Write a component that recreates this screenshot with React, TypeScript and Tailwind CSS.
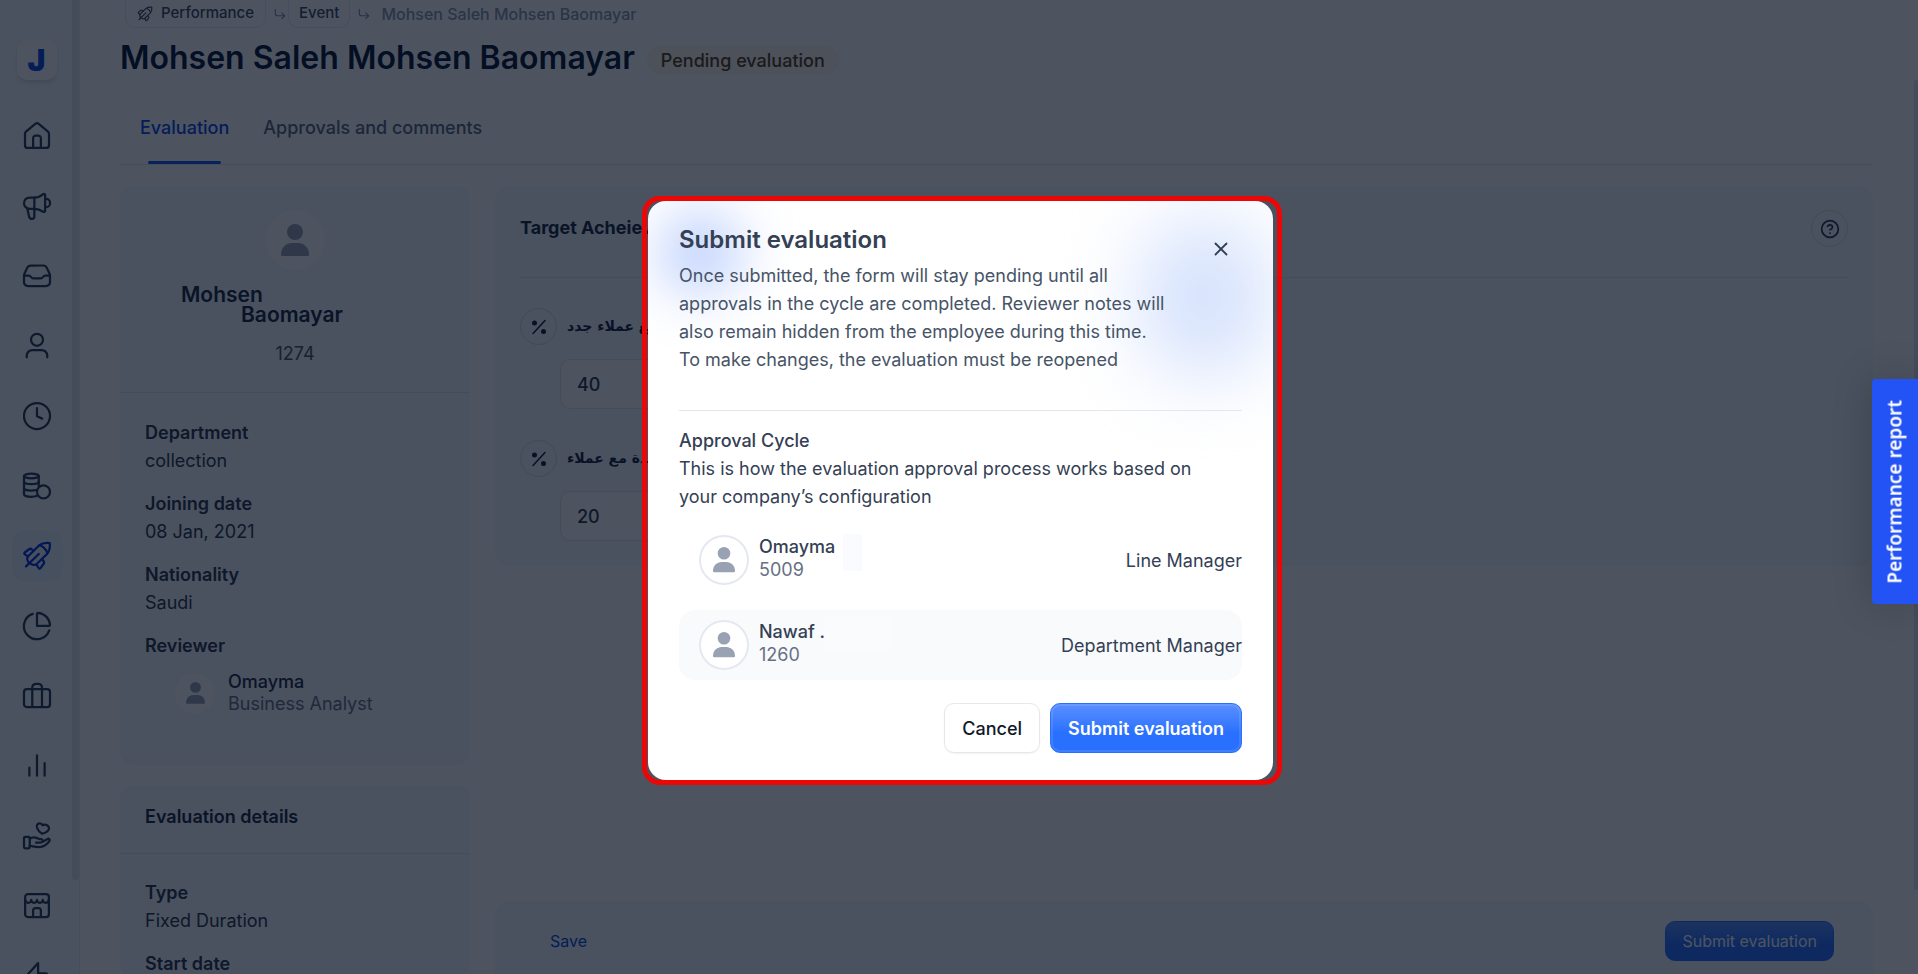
import React from "react";
import { CornerDownRight, X, CircleHelp } from "lucide-react";

interface IconProps {
  className?: string;
  children: React.ReactNode;
}

const Icon: React.FC<IconProps> = ({ className = "size-[30px]", children }) => (
  <svg
    viewBox="0 0 24 24"
    fill="none"
    stroke="currentColor"
    strokeWidth="1.8"
    strokeLinecap="round"
    strokeLinejoin="round"
    className={className}
    aria-hidden="true"
  >
    {children}
  </svg>
);

const rocket = (
  <>
    <path d="M13.6 3.6C16 1.7 19 1.3 22.2 1.7c.4 3.3-.2 6.3-2.1 8.6l-8.8 8.5c-1.6 1-4.4-.2-5.6-1.4s-2.1-3.6-.8-5.2z" />
    <path d="M14.2 3.4c2.8 1 5 3.2 6.2 6.2M3.2 20.3l10.2-9.9" />
    <path d="M9.2 8L8 6.8c-.6-.6-1.6-.7-2.3-.2L2.2 9.2c-.6.5-.5 1.1.1 1.5l2.5 1.6" />
    <path d="M15.9 14.6l1.2 1.3c.6.6.7 1.6.2 2.3l-2.5 3.5c-.5.6-1.2.5-1.5-.1l-1.7-2.7" />
  </>
);

const navItems: { label: string; active?: boolean; icon: React.ReactNode }[] = [
  {
    label: "Home",
    icon: (
      <>
        <path d="M2.4 10.2v9.1a2.2 2.2 0 002.2 2.2h14.8a2.2 2.2 0 002.2-2.2v-9.1c0-.7-.3-1.3-.8-1.7l-7.4-6.2a2.2 2.2 0 00-2.8 0L3.2 8.5a2.2 2.2 0 00-.8 1.7z" />
        <path d="M8.9 21.5v-7.7a2.2 2.2 0 012.2-2.2h1.8a2.2 2.2 0 012.2 2.2v7.7" />
      </>
    ),
  },
  {
    label: "Announcements",
    icon: (
      <>
        <path d="M9.9 5.2H6.1a4.5 4.5 0 000 9h3.8z" />
        <path d="M9.9 5.2c2.8 0 5.3-1.1 7.1-2.7.6-.5 1.5-.1 1.5.7v12.6c0 .8-.8 1.2-1.5.8-2-1.4-4.3-2.4-7.1-2.4" />
        <path d="M4.3 14.2l1.3 6.1c.3 1.2 1.2 2 2.4 2s1.9-.9 1.9-2.1v-6M18.5 6.3h.9a3 3 0 013 3v.6a3 3 0 01-3 3h-.9" />
      </>
    ),
  },
  {
    label: "Inbox",
    icon: (
      <>
        <path d="M1.6 12v4.9A3.1 3.1 0 004.7 20h14.6a3.1 3.1 0 003.1-3.1V12c0-.9-.2-1.6-.6-2.4l-2-4.2a3 3 0 00-2.7-1.8H6.9a3 3 0 00-2.7 1.8l-2 4.2c-.4.8-.6 1.5-.6 2.4z" />
        <path d="M1.6 11.7h3.7c1 0 1.5.5 1.9 1.1s1 1.1 1.9 1.1h5.8c.9 0 1.5-.5 1.9-1.1s.9-1.1 1.9-1.1h3.7" />
      </>
    ),
  },
  {
    label: "Employees",
    icon: (
      <>
        <circle cx="12" cy="7" r="4.8" />
        <path d="M3.8 21v-1.3a4.5 4.5 0 014.5-4.5h7.4a4.5 4.5 0 014.5 4.5V21" />
      </>
    ),
  },
  {
    label: "Attendance",
    icon: (
      <>
        <circle cx="12" cy="12" r="10.4" />
        <path d="M12 5.7v6.5l4.1 1.9" />
      </>
    ),
  },
  {
    label: "Payroll",
    icon: (
      <>
        <ellipse cx="7.5" cy="4" rx="5.9" ry="1.9" />
        <path d="M1.6 4v14.6c0 1.1 2.6 2 5.9 2 1.7 0 3.2-.2 4.3-.6M13.4 4v8.6" />
        <path d="M1.6 8.6c0 1.1 2.6 1.9 5.9 1.9s5.9-.8 5.9-1.9M1.6 13.7c0 1.1 2.6 1.9 5.9 1.9 1.5 0 2.8-.1 3.8-.4" />
        <circle cx="17.2" cy="16.7" r="5.2" />
      </>
    ),
  },
  { label: "Performance", active: true, icon: rocket },
  {
    label: "Reports",
    icon: (
      <>
        <path d="M8.6 2.3a10.4 10.4 0 1013.2 13.2" />
        <path d="M12.7 1.5c5.2.3 9.4 4.5 9.7 9.7 0 .4-.3.7-.7.7H12V2.2c0-.4.3-.7.7-.7z" />
      </>
    ),
  },
  {
    label: "Recruitment",
    icon: (
      <>
        <rect x="1.6" y="6.5" width="20.8" height="14.3" rx="2.2" />
        <path d="M8.2 20.7V5.2a3 3 0 013-3h1.8a3 3 0 013 3v15.5" />
      </>
    ),
  },
  {
    label: "Analytics",
    icon: <path d="M5.9 13.3v6.5M12 3.5v16.3M18.1 9.6v10.2" />,
  },
  {
    label: "Benefits",
    icon: (
      <>
        <rect x="1.6" y="12.6" width="4.6" height="9.2" rx="1" />
        <path d="M6.2 19.8c2.8.4 5.4 1.5 8.4 1 3-.4 5.7-2.4 7.4-4.9.7-1-.4-2.1-1.5-1.5l-4.3 2.3c-.8.5-1.8.6-2.7.6h-2.2" />
        <path d="M6.2 14.2c1.8-1.2 4.2-1.3 6.3-.3l1.5.5h1.3a1.7 1.7 0 011.4 2" />
        <path d="M16.2 10.2c-2-1.2-4-3.500-4.3-5.700-.2-1.800 1.400-3 3-2.500.7.2 1.200.8 1.500 1.400.6-.4 1.300-.7 2.300-.5 1.900.3 3.300 1.900 2.800 3.600-.7 1.900-3.100 3.100-5.300 3.700z" />
      </>
    ),
  },
  {
    label: "Marketplace",
    icon: (
      <>
        <rect x="2.5" y="2.5" width="19" height="18.3" rx="2.2" />
        <path d="M2.5 6.8c0 1.6 1.1 2.6 2.5 2.6s2.4-1 2.4-2.4c0 1.4 1.1 2.4 2.3 2.4S12 8.4 12 7c0 1.4 1.1 2.4 2.3 2.4s2.3-1 2.3-2.4c0 1.4 1 2.4 2.4 2.4s2.5-1 2.5-2.6" />
        <path d="M8.9 20.8v-5.2a2 2 0 012-2h2.2a2 2 0 012 2v5.2" />
      </>
    ),
  },
  {
    label: "Automation",
    icon: <path d="M12.9 1.6L4.2 11.2c-.7.8-.2 1.6.8 1.6h4.6L8 20.6c-.3 1.6.7 2 1.7.9l9.9-10.2c.7-.8.3-1.5-.7-1.5h-6z" />,
  },
];

// Silhueta padrão do avatar
const Person: React.FC<{ className: string }> = ({ className }) => (
  <svg viewBox="0 0 28 32" fill="currentColor" className={className} aria-hidden="true">
    <circle cx="14" cy="8" r="8" />
    <path d="M0 30.5C0 23.5 5 19 11 19h6c6 0 11 4.5 11 11.5 0 1-.5 1.5-1.5 1.5h-25C.5 32 0 31.5 0 30.5z" />
  </svg>
);

const Percent = () => (
  <span className="flex size-[37px] shrink-0 items-center justify-center rounded-full border border-[#d5dbe5]">
    <svg viewBox="0 0 16 16" className="size-4 text-[#16223c]" aria-hidden="true">
      <path d="M2 14.5L14 1.5" stroke="currentColor" strokeWidth="1.5" strokeLinecap="round" />
      <circle cx="3.5" cy="4" r="2.5" fill="currentColor" />
      <circle cx="12.5" cy="12.5" r="2.5" fill="currentColor" />
    </svg>
  </span>
);

const Field: React.FC<{ label: string; value: string }> = ({ label, value }) => (
  <div className="mb-[15px] leading-7">
    <dt className="font-semibold text-[#2c374b]">{label}</dt>
    <dd className="text-[#2c374b]">{value}</dd>
  </div>
);

const Target: React.FC<{ id: string; title: string; value: string }> = ({ id, title, value }) => (
  <div className="mb-[31px]">
    <div className="flex items-center gap-[10px]">
      <Percent />
      <label htmlFor={id} dir="rtl" className="font-['DejaVu_Sans',sans-serif] text-[14px] font-bold text-[#16223c]">
        {title}
      </label>
    </div>
    <input
      id={id}
      defaultValue={value}
      className="mt-[14px] ml-10 block h-[50px] w-1/3 rounded-[10px] border border-[#dfe4ec] bg-white px-4 font-medium text-[#2c374b]"
    />
  </div>
);

interface ApproverProps {
  name: string;
  code: string;
  role: string;
  rowClass?: string;
  children?: React.ReactNode;
}

const Approver: React.FC<ApproverProps> = ({ name, code, role, rowClass = "", children }) => (
  <li className={`flex h-[70px] items-center rounded-2xl pl-5 ${rowClass}`}>
    <span className="flex size-[50px] items-center justify-center rounded-full border-2 border-[#e4e8ef] bg-white">
      <Person className="w-[22px] text-[#98a2b3]" />
    </span>
    <div className="mb-1 ml-[10px] leading-[23px]">
      <p className="font-medium text-[#344054]">{name}</p>
      <p className="text-[#667085]">{code}</p>
    </div>
    {children}
    <span className="ml-auto text-[#344054]">{role}</span>
  </li>
);

const SubmitModal = () => (
  <div className="fixed inset-0 z-20 flex items-start justify-center bg-[#020c1d]/70 pt-[196px] pl-1.5">
    <div className="w-[640px] rounded-[18px] border-5 border-[#ec0606] pr-1 pl-px">
      <div
        role="dialog"
        aria-labelledby="modal-title"
        className="relative overflow-hidden rounded-[18px] bg-white px-[31px] pt-[25px] pb-[27px]"
      >
        <div className="absolute top-3 left-3 size-20 rounded-full bg-[#b9cdfc] blur-[28px]"></div>
        <div className="absolute top-4 right-1 h-40 w-32 rounded-full bg-[#d3e0fc] blur-[40px]"></div>

        <div className="relative flex items-start justify-between border-b border-[#e4e7ec] pb-9">
          <div>
            <h2 id="modal-title" className="mb-2 text-[24px] leading-7 font-semibold text-[#344054]">
              Submit evaluation
            </h2>
            <p className="leading-7 text-[#475467]">
              Once submitted, the form will stay pending until all
              <br />
              approvals in the cycle are completed. Reviewer notes will
              <br />
              also remain hidden from the employee during this time.
              <br />
              To make changes, the evaluation must be reopened
            </p>
          </div>
          <button aria-label="Close" className="mt-3 mr-[10px] text-[#344054]">
            <X className="size-[22px]" strokeWidth={2} />
          </button>
        </div>

        <h3 className="mt-4 leading-7 font-medium text-[#344054]">Approval Cycle</h3>
        <p className="leading-7 text-[#344054]">
          This is how the evaluation approval process works based on
          <br />
          your company’s configuration
        </p>

        <ul className="mt-[14px] flex flex-col gap-[15px]">
          <Approver name="Omayma" code="5009" role="Line Manager">
            <span className="mb-4 ml-2 h-[37px] w-[19px] bg-[#fafbfe]"></span>
          </Approver>
          <Approver name="Nawaf ." code="1260" role="Department Manager" rowClass="bg-[#f9fafb]">
            <span className="mb-6 h-[34px] w-[66px] bg-[#fafbfc]"></span>
          </Approver>
        </ul>

        <div className="mt-[23px] flex justify-end gap-[10px]">
          <button className="h-[50px] rounded-[10px] border border-[#e4e7ec] px-[17px] font-medium text-[#101828] shadow-xs">
            Cancel
          </button>
          <button className="h-[50px] rounded-[10px] border border-[#2970ff] bg-linear-to-b from-[#5a90ff] to-[#2970ff] to-60% px-[17px] font-semibold text-white inset-ring-2 inset-ring-white/10">
            Submit evaluation
          </button>
        </div>
      </div>
    </div>
  </div>
);

const App = () => {
  return (
    <div className="flex h-screen overflow-hidden bg-white font-['Inter',sans-serif] text-[18px] text-[#101828]">
      <nav className="relative flex w-20 shrink-0 flex-col items-center border-r border-[#e6e9ee] bg-[#f8f9fc] pt-10 pr-[6px]">
        <a
          href="#"
          className="flex size-10 shrink-0 items-center justify-center rounded-[10px] bg-white text-[30px] leading-none font-black text-[#0a47e0] shadow-md"
        >
          J
        </a>
        <div className="mt-[31px] flex flex-col gap-5">
          {navItems.map((item) => (
            <a
              key={item.label}
              href="#"
              aria-label={item.label}
              className={
                item.active
                  ? "flex size-[50px] items-center justify-center rounded-xl bg-[#eaf1fb] text-[#0a35d0]"
                  : "flex size-[50px] items-center justify-center text-[#2b3a56]"
              }
            >
              <Icon>{item.icon}</Icon>
            </a>
          ))}
        </div>
        <div className="absolute top-0 right-0 h-[880px] w-[7px] rounded-b bg-[#dfe5ec]"></div>
      </nav>

      <main className="flex min-w-0 flex-1 flex-col pr-[45px] pl-10">
        <div className="ml-[5px] flex h-7 shrink-0 items-center text-[15px] text-[#3f4a5e]">
          <a href="#" className="flex h-7 items-center gap-2 rounded-b-[10px] border border-t-0 border-[#e6e8f4] px-[11px] font-medium">
            <Icon className="size-4">{rocket}</Icon>
            Performance
          </a>
          <CornerDownRight className="mr-px ml-[7px] size-[14px] text-[#8290a8]" />
          <a href="#" className="flex h-7 items-center rounded-b-[10px] border border-t-0 border-[#e6e8f4] px-[10px] font-medium">
            Event
          </a>
          <CornerDownRight className="mr-[10px] ml-[7px] size-[14px] text-[#8290a8]" />
          <span className="text-[16px] font-medium text-[#8b96aa]">Mohsen Saleh Mohsen Baomayar</span>
        </div>

        <div className="mt-[10px] flex h-10 shrink-0 items-center gap-3">
          <h1 className="text-[32px] font-semibold text-[#0d1838]">Mohsen Saleh Mohsen Baomayar</h1>
          <span className="mt-1 flex h-[30px] items-center rounded-full bg-[#fdf4ec] px-[14px] font-medium text-[#5a3d18]">
            Pending evaluation
          </span>
        </div>

        <div className="mt-[34px] flex h-[53px] shrink-0 gap-[34px] border-b border-[#e0e3e9] pl-5">
          <button className="relative flex flex-col items-center pt-0.5 font-medium text-[#0a47e0]">
            Evaluation
            <span className="absolute bottom-0 h-[3px] w-[73px] rounded bg-[#1656ee]"></span>
          </button>
          <button className="self-start pt-0.5 font-medium text-[#5b667a]">Approvals and comments</button>
        </div>

        <div className="flex min-h-0 flex-1 gap-[25px] pt-[21px]">
          <aside className="w-[350px] shrink-0">
            <section className="h-[579px] rounded-[14px] bg-[#f5f6fa] pt-6">
              <span className="mx-auto flex size-[60px] items-center justify-center rounded-full bg-white">
                <Person className="w-7 text-[#98a2b3]" />
              </span>
              <p className="mt-[15px] text-[21px] leading-5 font-semibold text-[#1b2942]">
                <span className="block pl-[61px]">Mohsen</span>
                <span className="block pl-[121px]">Baomayar</span>
              </p>
              <p className="mt-[15px] h-[53px] border-b border-[#e0e4ec] text-center leading-7 text-[#475467]">1274</p>
              <dl className="px-[25px] pt-[26px]">
                <Field label="Department" value="collection" />
                <Field label="Joining date" value="08 Jan, 2021" />
                <Field label="Nationality" value="Saudi" />
                <dt className="leading-7 font-semibold text-[#2c374b]">Reviewer</dt>
                <dd className="mt-[11px] ml-[30px] flex items-center gap-[13px] leading-[22px]">
                  <span className="flex size-10 items-center justify-center rounded-full bg-white">
                    <Person className="w-[19px] text-[#98a2b3]" />
                  </span>
                  <span>
                    <span className="block font-medium text-[#1b2942]">Omayma</span>
                    <span className="block text-[#667085]">Business Analyst</span>
                  </span>
                </dd>
              </dl>
            </section>

            <section className="mt-5 rounded-[14px] bg-[#f5f6fa]">
              <h2 className="h-[69px] border-b border-[#e0e4ec] px-[25px] pt-[18px] leading-7 font-semibold text-[#1b2942]">
                Evaluation details
              </h2>
              <dl className="px-[25px] pt-[25px]">
                <Field label="Type" value="Fixed Duration" />
                <Field label="Start date" value="" />
              </dl>
            </section>
          </aside>

          <div className="flex min-w-0 flex-1 flex-col justify-between">
            <section className="h-[380px] rounded-[14px] bg-[#f5f6fa] px-[25px] pt-6">
              <div className="flex h-[68px] items-start justify-between border-b border-[#e0e4ec]">
                <h2 className="mt-1 leading-7 font-bold text-[#1b2942]">Target Acheieve</h2>
                <button
                  aria-label="Help"
                  className="flex size-[37px] items-center justify-center rounded-full border border-[#d8dee8] text-[#26334c]"
                >
                  <CircleHelp className="size-5" />
                </button>
              </div>
              <div className="pt-[30px]">
                <Target id="target-1" title="مع عملاء جدد" value="40" />
                <Target id="target-2" title="يدة مع عملاء" value="20" />
              </div>
            </section>

            <footer className="flex h-[73px] items-start justify-between rounded-t-[14px] bg-[#f5f6fa] pt-5 pr-[39px] pl-[55px] text-[16px]">
              <button className="h-10 text-[#0a47e0]">Save</button>
              <button className="h-10 rounded-[10px] border border-[#2970ff] bg-linear-to-b from-[#5a90ff] to-[#2970ff] to-60% px-4 text-white">
                Submit evaluation
              </button>
            </footer>
          </div>
        </div>
      </main>

      <div className="fixed top-20 right-0 h-[810px] w-1 rounded bg-[#dfe3ee]"></div>

      <SubmitModal />

      <button className="fixed top-[379px] right-0 z-30 flex h-[225px] w-[46px] items-center justify-center rounded-l bg-[#2453f5] shadow-[0_0_40px_rgba(0,0,0,0.2)]">
        <span className="rotate-180 font-['Noto_Sans',sans-serif] text-[19px] font-semibold text-white [writing-mode:vertical-rl]">
          Performance report
        </span>
      </button>
    </div>
  );
};

export default App;
